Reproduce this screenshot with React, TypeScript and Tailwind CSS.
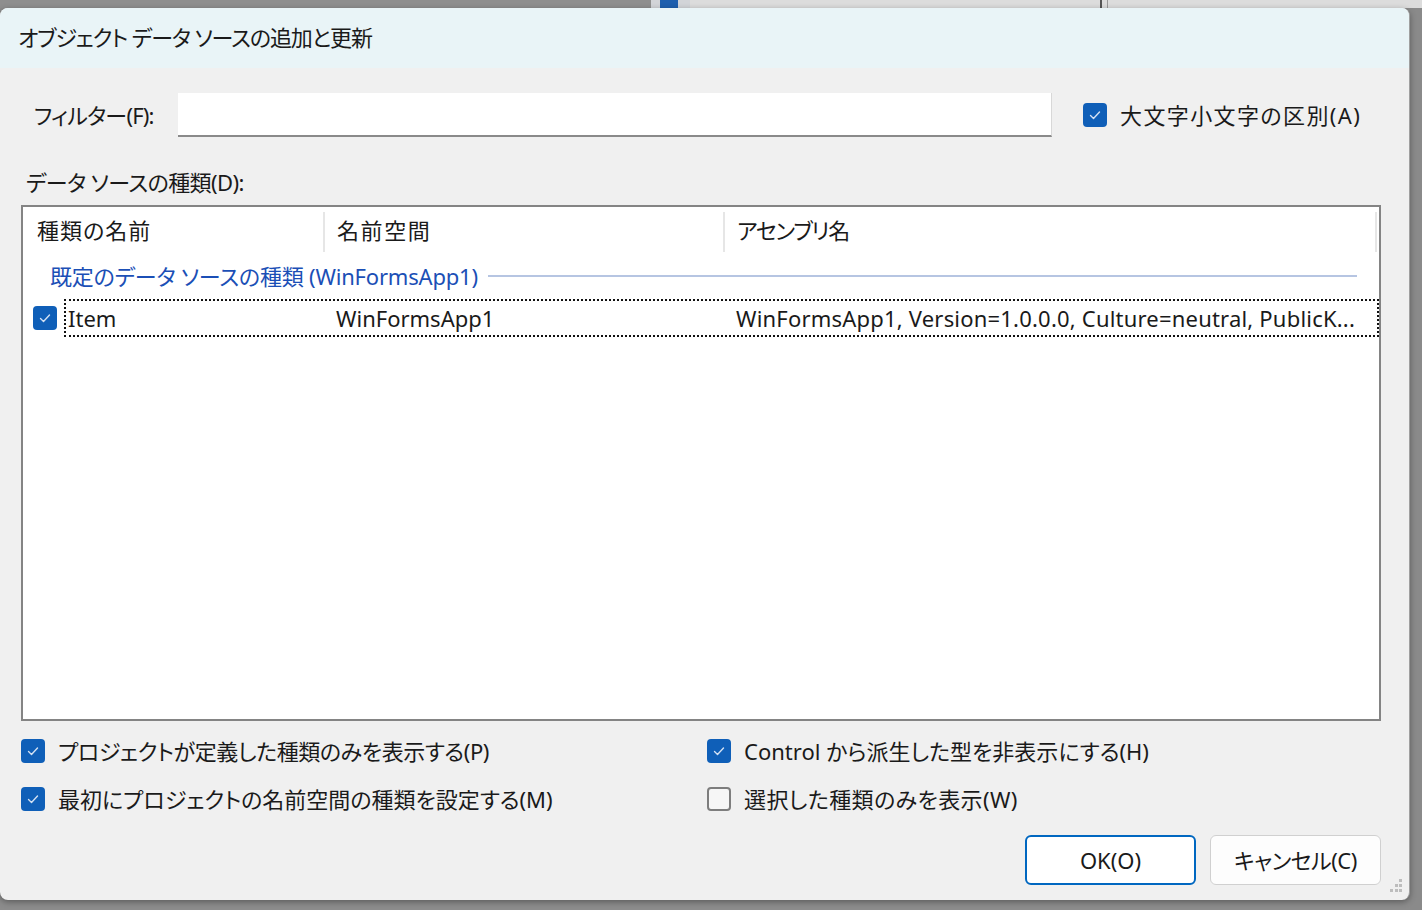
import React from 'react'

function Check({ checked = true }: { checked?: boolean }) {
  if (!checked) {
    return (
      <span className="w-[24px] h-[24px] shrink-0 rounded-[4px] border-2 border-[#7d7d7d] bg-[#f6f6f6]" />
    )
  }
  return (
    <span className="w-[24px] h-[24px] shrink-0 rounded-[4px] bg-[#0f5fb8] flex items-center justify-center">
      <svg width="24" height="24" viewBox="0 0 24 24" fill="none">
        <path d="M7.5 12.5l3 3 6-6.5" stroke="#d3e1f3" strokeWidth="1.4" strokeLinecap="round" strokeLinejoin="round" />
      </svg>
    </span>
  )
}

function Option({ label, checked = true, track = '' }: { label: string; checked?: boolean; track?: string }) {
  return (
    <div className="flex items-center gap-[13px] h-[24px]">
      <Check checked={checked} />
      <span className={`text-[22px] leading-[24px] text-[#1a1a1a] whitespace-nowrap ${track}`}>{label}</span>
    </div>
  )
}

export default function App() {
  return (
    <div className="w-[1422px] h-[910px] bg-[#8c8c8c] flex flex-col overflow-hidden font-['Noto_Sans','Noto_Sans_CJK_JP',sans-serif] [font-feature-settings:'palt']">
      {/* desktop behind the dialog */}
      <div className="h-[8px] flex shrink-0">
        <div className="w-[651px] bg-[#8e8e8e]" />
        <div className="w-[39px] bg-[#d2d4d8] flex">
          <div className="ml-[9px] w-[18px] bg-[#1e5fae]" />
        </div>
        <div className="w-[410px] bg-[#dcdcdc]" />
        <div className="w-[2px] bg-[#555]" />
        <div className="w-[5px] bg-[#dcdcdc]" />
        <div className="w-[1px] bg-[#999]" />
        <div className="flex-1 bg-[#dcdcdc]" />
      </div>

      <div className="flex flex-1">
        <div className="w-[1410px] h-[892px] rounded-[8px] bg-[#f0f0f0] overflow-hidden border-r border-[#a0a0a0] shadow-[0_2px_6px_rgba(0,0,0,0.35)] flex flex-col relative">
          {/* title bar */}
          <div className="h-[60px] bg-[#e9f4f7] flex items-center pl-[18px] pb-[3px] shrink-0">
            <span className="text-[22px] leading-[28px] text-[#1a1a1a] tracking-[-1.1px]">オブジェクト データ ソースの追加と更新</span>
          </div>

          {/* filter row */}
          <div className="flex items-center mt-[25px] h-[44px]">
            <span className="ml-[34px] w-[144px] text-[22px] text-[#1a1a1a] whitespace-nowrap tracking-[-0.8px]">フィルター(F):</span>
            <div className="w-[874px] h-[44px] bg-white border-b-2 border-[#8a8a8a] border-r border-r-[#d8d8d8]" />
            <div className="ml-[31px]">
              <Option label="大文字小文字の区別(A)" track="tracking-[1.4px]" />
            </div>
          </div>

          <div className="mt-[33px] ml-[26px] h-[24px] text-[22px] leading-[24px] text-[#1a1a1a] tracking-[-0.6px]">
            データ ソースの種類(D):
          </div>

          {/* list view */}
          <div className="mt-[11px] ml-[21px] w-[1360px] h-[516px] bg-white border-2 border-[#848484] flex flex-col">
            <div className="flex h-[50px] shrink-0 text-[22px] leading-[28px] text-[#1a1a1a]">
              <div className="w-[300px] pl-[14px] pt-[9px] tracking-[1px]">種類の名前</div>
              <div className="w-[400px] pl-[12px] border-l-2 border-[#e6e6e6] my-[5px] pt-[4px] tracking-[1.6px]">名前空間</div>
              <div className="w-[654px] pl-[12px] border-l-2 border-r-2 border-[#e6e6e6] my-[5px] pt-[4px] tracking-[-1.2px]">アセンブリ名</div>
            </div>

            <div className="flex items-center h-[38px] pl-[27px] pr-[22px]">
              <span className="text-[22px] leading-[28px] text-[#1b4fb6] whitespace-nowrap tracking-[-0.2px]">既定のデータ ソースの種類 (WinFormsApp1)</span>
              <div className="flex-1 ml-[10px] h-[2px] bg-[#b6c5e2]" />
            </div>

            <div className="flex items-center h-[38px] mt-[4px] pl-[10px]">
              <Check />
              <div className="ml-[7px] flex-1 h-[38px] border-2 border-dotted border-[#111] flex items-center text-[22px] leading-[28px] text-[#1a1a1a] whitespace-nowrap">
                <div className="w-[259px] pl-[2px]">Item</div>
                <div className="w-[400px] pl-[11px]">WinFormsApp1</div>
                <div className="flex-1 pl-[11px] tracking-[0.2px]">WinFormsApp1, Version=1.0.0.0, Culture=neutral, PublicK...</div>
              </div>
            </div>
          </div>

          {/* options */}
          <div className="mt-[18px] ml-[21px] grid grid-cols-[686px_1fr] gap-y-[24px]">
            <Option label="プロジェクトが定義した種類のみを表示する(P)" track="tracking-[-0.4px]" />
            <Option label="Control から派生した型を非表示にする(H)" />
            <Option label="最初にプロジェクトの名前空間の種類を設定する(M)" />
            <Option label="選択した種類のみを表示(W)" checked={false} track="tracking-[0.4px]" />
          </div>

          {/* buttons */}
          <div className="mt-[24px] flex justify-end gap-[14px] pr-[28px]">
            <button className="w-[171px] h-[50px] rounded-[6px] bg-white border-2 border-[#0067c0] text-[22px] text-[#1a1a1a]">
              OK(O)
            </button>
            <button className="w-[171px] h-[50px] rounded-[6px] bg-[#fdfdfd] border border-[#d0d0d0] text-[22px] text-[#1a1a1a] tracking-[-0.5px]">
              キャンセル(C)
            </button>
          </div>

          {/* resize grip */}
          <svg className="absolute right-[4px] bottom-[5px]" width="20" height="20" viewBox="0 0 20 20">
            <rect x="14" y="4" width="3" height="3" fill="#bdbdbd" />
            <rect x="10" y="9" width="3" height="3" fill="#bdbdbd" />
            <rect x="14" y="9" width="3" height="3" fill="#bdbdbd" />
            <rect x="5" y="14" width="3" height="3" fill="#bdbdbd" />
            <rect x="10" y="14" width="3" height="3" fill="#bdbdbd" />
            <rect x="14" y="14" width="3" height="3" fill="#bdbdbd" />
          </svg>
        </div>
        <div className="flex-1 bg-[#8a8a8a]" />
      </div>
    </div>
  )
}
